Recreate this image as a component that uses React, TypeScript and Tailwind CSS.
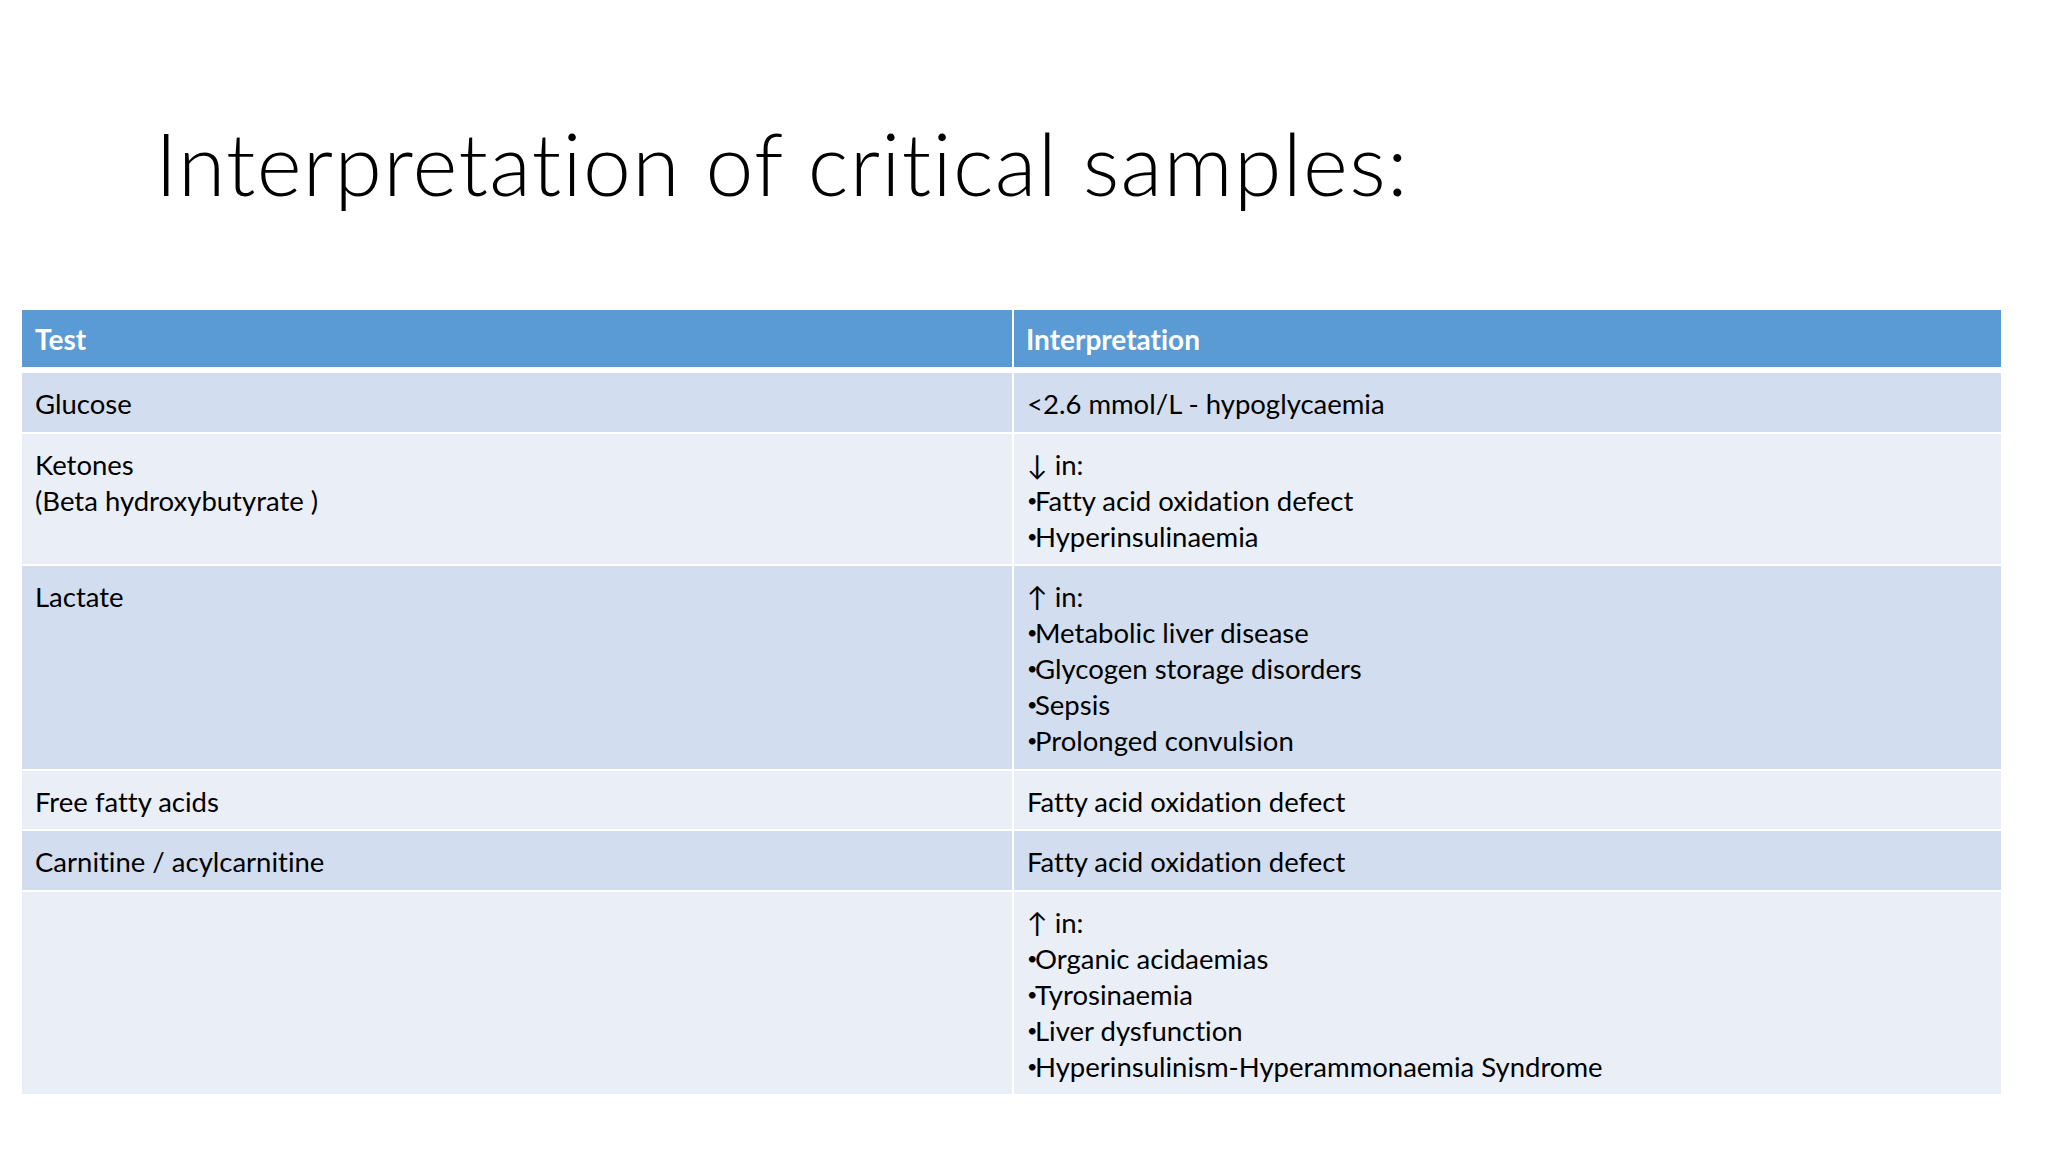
import React from 'react'

type Row = {
  test: string[]
  interp: string[]
  band: 'dark' | 'light'
}

const rows: Row[] = [
  { test: ['Glucose'], interp: ['<2.6 mmol/L - hypoglycaemia'], band: 'dark' },
  {
    test: ['Ketones', '(Beta hydroxybutyrate )'],
    interp: ['↓ in:', '•Fatty acid oxidation defect', '•Hyperinsulinaemia'],
    band: 'light'
  },
  {
    test: ['Lactate'],
    interp: ['↑ in:', '•Metabolic liver disease', '•Glycogen storage disorders', '•Sepsis', '•Prolonged convulsion'],
    band: 'dark'
  },
  { test: ['Free fatty acids'], interp: ['Fatty acid oxidation defect'], band: 'light' },
  { test: ['Carnitine / acylcarnitine'], interp: ['Fatty acid oxidation defect'], band: 'dark' },
  {
    test: [],
    interp: [
      '↑ in:',
      '•Organic acidaemias',
      '•Tyrosinaemia',
      '•Liver dysfunction',
      '•Hyperinsulinism-Hyperammonaemia Syndrome'
    ],
    band: 'light'
  }
]

function Line({ text }: { text: string }) {
  if (text.startsWith('•')) {
    return (
      <div className="whitespace-pre h-[36px] overflow-visible">
        <span className="inline-block w-[8px] text-[18px] leading-none align-[4px]">•</span>
        {text.slice(1)}
      </div>
    )
  }
  return <div className="whitespace-pre h-[36px]">{text}</div>
}

function Cell({ lines, bg }: { lines: string[]; bg: string }) {
  return (
    <div className={`flex-1 ${bg} pl-[13px] pr-[13px] pt-[13px] pb-[9.5px] text-[27.5px] leading-[36px] text-black`}>
      {lines.map((l, i) => (
        <Line key={i} text={l} />
      ))}
    </div>
  )
}

export default function App() {
  return (
    <div
      className="w-[2048px] h-[1152px] bg-white overflow-hidden [font-variant-ligatures:none]"
      style={{ fontFamily: 'Lato, "DejaVu Sans", sans-serif' }}
    >
      {/* Title */}
      <div className="pl-[155px] pt-[113px] h-[310px]">
        <h1 className="text-[86px] leading-[100px] font-light text-black tracking-[1.3px]">
          Interpretation of critical samples:
        </h1>
      </div>

      {/* Table */}
      <div className="ml-[22px] w-[1979px] flex flex-col">
        <div className="flex h-[57px] bg-[#5b9bd5] text-white font-bold text-[28px] border-b-[6px] border-white box-content">
          <div className="w-[990px] pl-[13px] flex items-center">Test</div>
          <div className="w-[2px] bg-white" />
          <div className="flex-1 pl-[12px] flex items-center">Interpretation</div>
        </div>
        {rows.map((r, i) => {
          const bg = r.band === 'dark' ? 'bg-[#d2deef]' : 'bg-[#eaeff7]'
          return (
            <div key={i} className={`flex ${i < rows.length - 1 ? 'border-b-2 border-white' : ''}`}>
              <div className="w-[990px] flex">
                <Cell lines={r.test} bg={bg} />
              </div>
              <div className="w-[2px] bg-white" />
              <div className="flex-1 flex">
                <Cell lines={r.interp} bg={bg} />
              </div>
            </div>
          )
        })}
      </div>
    </div>
  )
}
